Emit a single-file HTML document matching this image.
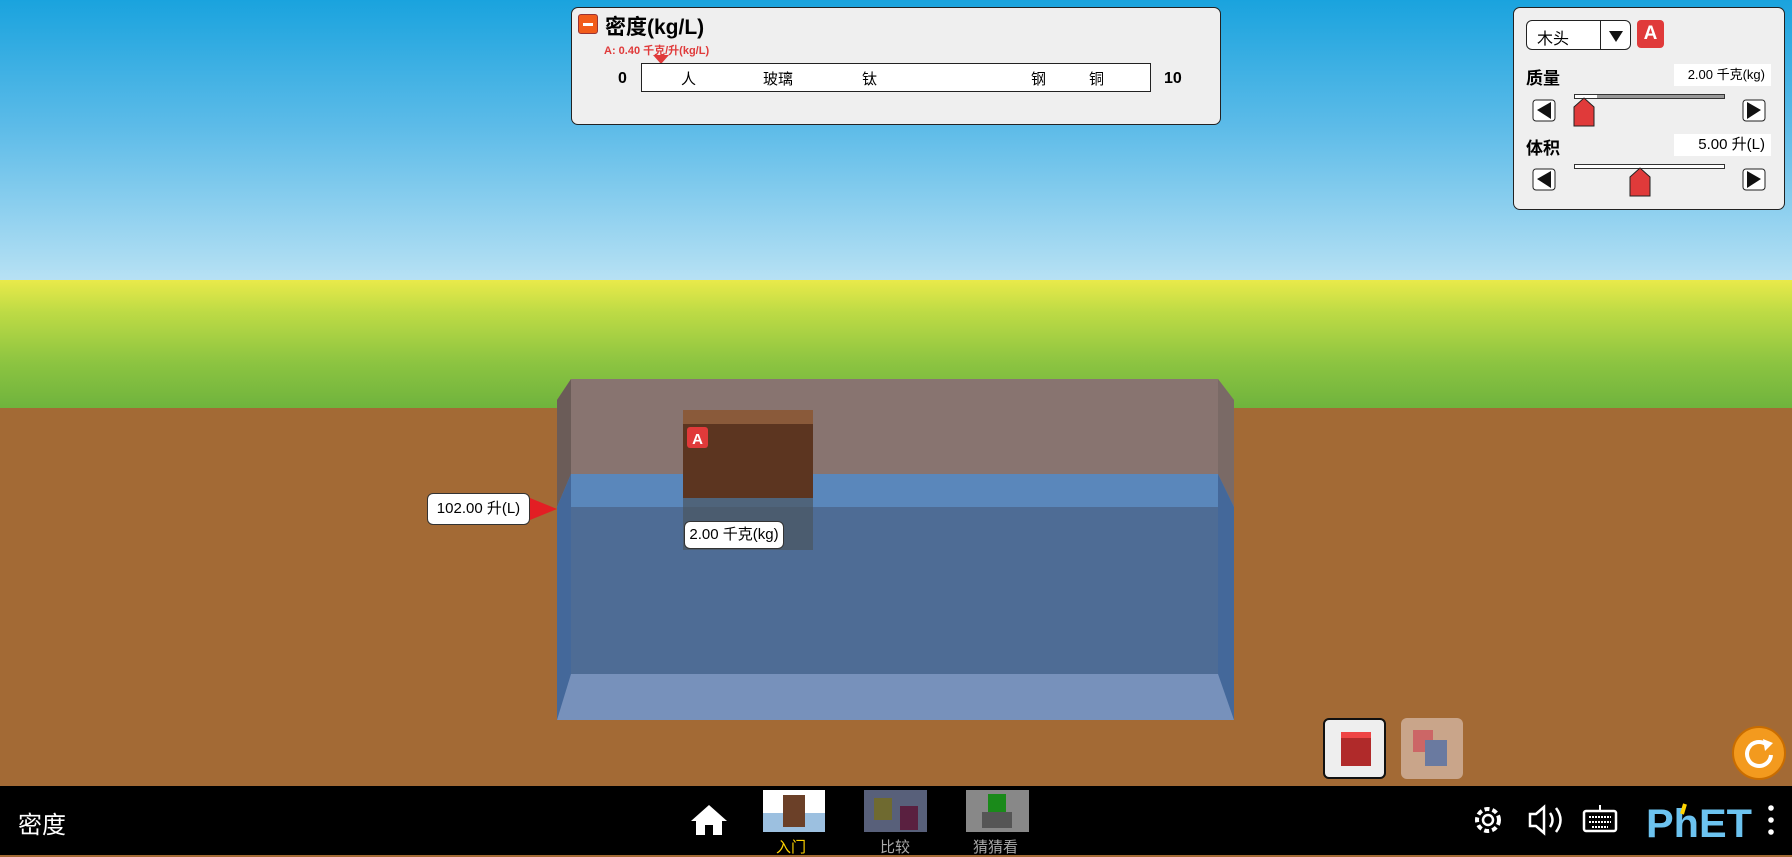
<!DOCTYPE html>
<html><head><meta charset="utf-8"><style>
*{margin:0;padding:0;box-sizing:border-box}
body{width:1792px;height:855px;overflow:hidden;position:relative;font-family:"Liberation Sans","Noto Sans CJK SC",sans-serif;background:#a36a35}
.abs{position:absolute}
</style></head><body>
<div class="abs" style="left:0;top:0;width:1792px;height:280px;background:linear-gradient(#1aa3de 0%,#5cbbe8 45%,#b7e1f4 100%)"></div>
<div class="abs" style="left:0;top:280px;width:1792px;height:128px;background:linear-gradient(#e9ea4a 0%,#bedb45 25%,#8cc441 65%,#6fb33d 100%)"></div>
<div class="abs" style="left:0;top:408px;width:1792px;height:378px;background:#a36a35"></div>

<!-- tank -->
<svg class="abs" style="left:0;top:0" width="1792" height="786">
<polygon points="571,379 1218,379 1234,400 557,400" fill="#8a7a74" opacity="0.9"/>
<rect x="571" y="379" width="647" height="95" fill="#887470"/>
<polygon points="557,400 571,379 571,695 557,720" fill="#6b5c58"/>
<polygon points="1234,400 1218,379 1218,695 1234,720" fill="#7a6a66"/>
<polygon points="571,474 1218,474 1234,507 557,507" fill="#5a87bb"/>
<rect x="557" y="507" width="677" height="213" fill="#4e6c95"/>
<polygon points="571,474 557,507 557,720 571,695" fill="#44689a"/>
<polygon points="1218,474 1234,507 1234,720 1218,695" fill="#44689a"/>
<polygon points="571,674 1218,674 1234,720 557,720" fill="#7791bb"/>
<rect x="683" y="410" width="130" height="88" fill="#5c3520"/>
<rect x="683" y="410" width="130" height="14" fill="#8a5a3a"/>
<rect x="683" y="498" width="130" height="52" fill="#4a5560" opacity="0.7"/>
<rect x="687" y="427" width="21" height="21" rx="3" fill="#e03a3a"/>
<text x="697.5" y="444" font-size="15" font-weight="bold" fill="#fff" text-anchor="middle" font-family="Liberation Sans">A</text>
<polygon points="530,498 557,509 530,520" fill="#e31e24"/>
</svg>
<div class="abs" style="left:427px;top:493px;width:103px;height:32px;background:#fff;border:1px solid #333;border-radius:6px;font-size:15px;line-height:30px;text-align:center">102.00 升(L)</div>
<div class="abs" style="left:684px;top:521px;width:100px;height:28px;background:#fff;border:1px solid #333;border-radius:6px;font-size:15px;line-height:26px;text-align:center">2.00 千克(kg)</div>

<!-- density panel -->
<div class="abs" style="left:571px;top:7px;width:650px;height:118px;background:#efefef;border:1px solid #222;border-radius:7px"></div>
<div class="abs" style="left:578px;top:14px;width:20px;height:20px;background:#f25c1a;border:1px solid #933;border-radius:3px"><div style="margin:8px 4px;height:3px;background:#fff"></div></div>
<div class="abs" style="left:605px;top:11px;font-size:21px;font-weight:bold">密度(kg/L)</div>
<div class="abs" style="left:604px;top:42px;font-size:11px;font-weight:bold;color:#e03a3a">A: 0.40 千克/升(kg/L)</div>
<div class="abs" style="left:653px;top:55px;width:0;height:0;border-left:8px solid transparent;border-right:8px solid transparent;border-top:9px solid #e03a3a"></div>
<div class="abs" style="left:641px;top:63px;width:510px;height:29px;background:#fff;border:1px solid #222"></div>
<div class="abs" style="left:618px;top:70px;font-size:16px;font-weight:bold">0</div>
<div class="abs" style="left:1164px;top:70px;font-size:16px;font-weight:bold">10</div>
<div class="abs" style="left:681px;top:68px;font-size:15px">人</div>
<div class="abs" style="left:763px;top:68px;font-size:15px">玻璃</div>
<div class="abs" style="left:862px;top:68px;font-size:15px">钛</div>
<div class="abs" style="left:1031px;top:68px;font-size:15px">钢</div>
<div class="abs" style="left:1089px;top:68px;font-size:15px">铜</div>

<!-- right panel -->
<div class="abs" style="left:1513px;top:7px;width:272px;height:203px;background:#efefef;border:1px solid #222;border-radius:7px"></div>
<div class="abs" style="left:1526px;top:20px;width:105px;height:30px;background:#fff;border:1px solid #222;border-radius:6px"><span style="position:absolute;left:10px;top:4px;font-size:16px">木头</span><div style="position:absolute;left:73px;top:0;width:1px;height:28px;background:#222"></div><div style="position:absolute;left:82px;top:10px;border-left:7px solid transparent;border-right:7px solid transparent;border-top:11px solid #111"></div></div>
<div class="abs" style="left:1637px;top:20px;width:27px;height:28px;background:#e03a3a;border-radius:4px;color:#fff;font-weight:bold;font-size:19px;text-align:center;line-height:28px">A</div>
<div class="abs" style="left:1526px;top:64px;font-size:17px;font-weight:bold">质量</div>
<div class="abs" style="left:1674px;top:64px;width:97px;height:22px;background:#fff;font-size:13px;text-align:right;padding-right:6px;line-height:22px">2.00 千克(kg)</div>
<div class="abs" style="left:1574px;top:94px;width:151px;height:5px;background:#999;border:1px solid #333"><div style="width:22px;height:3px;background:#fff"></div></div>
<div class="abs" style="left:1526px;top:134px;font-size:17px;font-weight:bold">体积</div>
<div class="abs" style="left:1674px;top:134px;width:97px;height:22px;background:#fff;font-size:15px;text-align:right;padding-right:6px;line-height:22px">5.00 升(L)</div>
<div class="abs" style="left:1574px;top:164px;width:151px;height:5px;background:#fff;border:1px solid #333"></div>
<svg class="abs" style="left:1500px;top:90px" width="292" height="110">
<polygon points="84,8 94,17 94,36 74,36 74,17" fill="#e03a3a" stroke="#222"/>
<polygon points="140,78 150,87 150,106 130,106 130,87" fill="#e03a3a" stroke="#222"/>
<g fill="#fff" stroke="#222"><rect x="33" y="10" width="22" height="21" rx="3"/><rect x="243" y="10" width="22" height="21" rx="3"/><rect x="33" y="79" width="22" height="21" rx="3"/><rect x="243" y="79" width="22" height="21" rx="3"/></g>
<g fill="#111"><polygon points="37,20 51,12 51,29"/><polygon points="261,20 247,12 247,29"/><polygon points="37,89 51,81 51,98"/><polygon points="261,89 247,81 247,98"/></g>
</svg>

<!-- buttons -->
<div class="abs" style="left:1323px;top:718px;width:63px;height:61px;background:#eee;border:2px solid #111;border-radius:6px"><div style="margin:12px 16px;width:30px;height:34px;background:#b02a2a;border-top:6px solid #e44"></div></div>
<div class="abs" style="left:1401px;top:718px;width:62px;height:61px;background:#c9a58a;border-radius:6px"><div style="position:absolute;left:12px;top:12px;width:20px;height:22px;background:#c66"></div><div style="position:absolute;left:24px;top:22px;width:22px;height:26px;background:#6a7aa0"></div></div>
<svg class="abs" style="left:1731px;top:725px" width="56" height="56"><circle cx="28" cy="28" r="26" fill="#f39a1e" stroke="#c96d00" stroke-width="2"/><path d="M36 20 A12 12 0 1 0 40 30" fill="none" stroke="#fff" stroke-width="4"/><polygon points="32,14 42,18 34,26" fill="#fff"/></svg>

<!-- nav bar -->
<div class="abs" style="left:0;top:786px;width:1792px;height:69px;background:#000"></div>
<div class="abs" style="left:18px;top:805px;font-size:24px;color:#fff">密度</div>
<svg class="abs" style="left:690px;top:803px" width="38" height="34"><polygon points="19,2 37,18 32,18 32,32 23,32 23,22 15,22 15,32 6,32 6,18 1,18" fill="#fff"/></svg>
<div class="abs" style="left:763px;top:790px;width:62px;height:42px;background:linear-gradient(#fff 55%,#9cc0e0 55%)"><div style="margin:5px 20px;width:22px;height:32px;background:#6b4028"></div></div>
<div class="abs" style="left:776px;top:836px;font-size:15px;color:#ffd400">入门</div>
<div class="abs" style="left:864px;top:790px;width:63px;height:42px;background:#58607a"><div style="position:absolute;left:10px;top:8px;width:18px;height:22px;background:#6f6a30"></div><div style="position:absolute;left:36px;top:16px;width:18px;height:24px;background:#5a2040"></div></div>
<div class="abs" style="left:880px;top:836px;font-size:15px;color:#aaa">比较</div>
<div class="abs" style="left:966px;top:790px;width:63px;height:42px;background:#888"><div style="position:absolute;left:22px;top:4px;width:18px;height:18px;background:#1a8a1a"></div><div style="position:absolute;left:16px;top:22px;width:30px;height:16px;background:#555"></div></div>
<div class="abs" style="left:973px;top:836px;font-size:15px;color:#aaa">猜猜看</div>
<svg class="abs" style="left:1470px;top:802px" width="322" height="38">
<circle cx="18" cy="18" r="11" fill="none" stroke="#fff" stroke-width="4" stroke-dasharray="5 3"/><circle cx="18" cy="18" r="5" fill="none" stroke="#fff" stroke-width="2.5"/>
<path d="M60 12 h6 l8 -7 v26 l-8 -7 h-6z" fill="none" stroke="#fff" stroke-width="2.5"/><path d="M80 11 q5 7 0 14 M86 6 q9 12 0 24" fill="none" stroke="#fff" stroke-width="2.5"/>
<rect x="114" y="9" width="32" height="20" rx="2" fill="none" stroke="#fff" stroke-width="2.5"/><path d="M119 15h22M119 20h22M122 25h16" stroke="#fff" stroke-width="2" stroke-dasharray="2 1"/><path d="M130 9 v-6" stroke="#fff" stroke-width="2"/>
<text x="176" y="35" font-size="40" font-weight="bold" fill="#6cc3f0" font-family="Liberation Sans" textLength="106" lengthAdjust="spacingAndGlyphs">PhET</text>
<path d="M215 2 l-3 10" stroke="#ffd400" stroke-width="4"/>
<circle cx="301" cy="6" r="2.8" fill="#fff"/><circle cx="301" cy="18" r="2.8" fill="#fff"/><circle cx="301" cy="30" r="2.8" fill="#fff"/>
</svg>
</body></html>
